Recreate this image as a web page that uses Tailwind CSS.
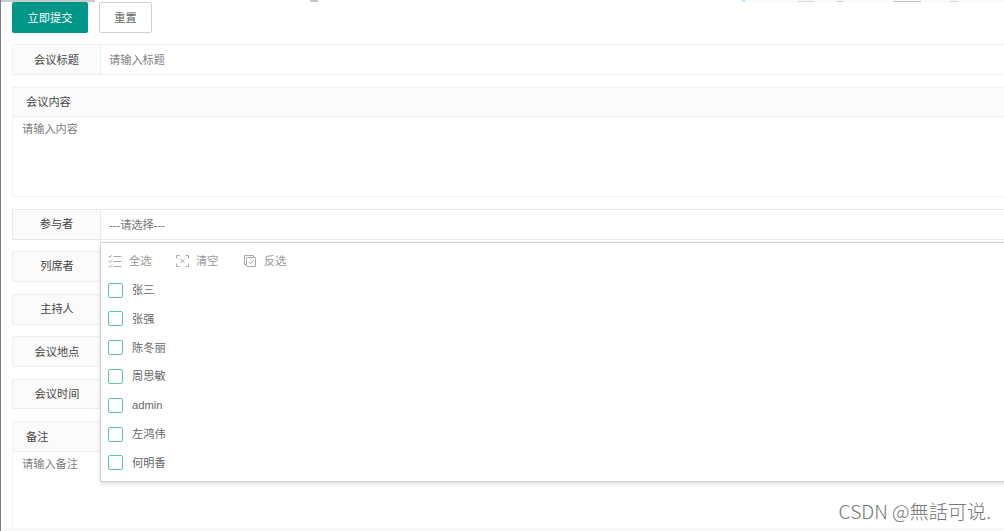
<!DOCTYPE html>
<html lang="zh-CN">

<head>
    <meta charset="UTF-8">
    <meta name="viewport" content="width=device-width, initial-scale=1.0">
    <title>会议发布</title>
    <script src="https://cdn.jsdelivr.net/npm/@tailwindcss/browser@4"></script>
</head>

<body class="relative w-[1004px] h-[531px] overflow-hidden bg-white border-l border-[#7d7b86] text-[11.2px] leading-[16px] text-[#444] font-['Liberation_Sans','Noto_Sans_CJK_SC',sans-serif]">

    <!-- Page edge above the form -->
    <div class="flex h-[2px]">
        <div class="w-[94px] bg-[#c9c9c9]"></div>
        <div class="w-[215px]"></div>
        <div class="w-[8px] bg-[#c9c9c9]"></div>
        <div class="w-[424px]"></div>
        <div class="w-[3px] bg-[#c8e8f7]"></div>
        <div class="flex-1 bg-[#f5fbfe] flex">
            <div class="w-[53px]"></div>
            <div class="w-[17px] h-px mt-px bg-[#d2d4d5]"></div>
            <div class="w-[21px]"></div>
            <div class="w-[8px] h-px mt-px bg-[#d2d4d5]"></div>
            <div class="w-[49px]"></div>
            <div class="w-[28px] h-px mt-px bg-[#c2c4c5]"></div>
            <div class="w-[29px]"></div>
            <div class="w-[9px] h-px mt-px bg-[#d2d4d5]"></div>
        </div>
    </div>

    <form class="pl-[11px]">
        <!-- Buttons -->
        <div class="flex gap-[11px] h-[42px]">
            <button type="button" class="w-[76px] h-[31px] pt-px rounded-[2px] bg-[#009688] text-white">立即提交</button>
            <button type="reset" class="w-[53px] h-[31px] pt-px rounded-[2px] border border-[#d0d0d0] bg-white text-[#666]">重置</button>
        </div>

        <!-- Title -->
        <div class="flex h-[31px] mb-[12px] border border-r-0 border-[#eee] rounded-l-[2px]">
            <label class="w-[88px] border-r border-[#eee] bg-[#fbfbfb] flex items-center justify-center">会议标题</label>
            <div class="flex-1 pl-[8px] flex items-center text-[#808080]">请输入标题</div>
        </div>

        <!-- Content -->
        <div class="h-[110px] mb-[12px] border border-r-0 border-[#f2f2f2] rounded-l-[2px]">
            <label class="h-[29px] pl-[13px] border-b border-[#eee] bg-[#fbfbfb] flex items-center">会议内容</label>
            <div class="pl-[9px] pt-[4px] text-[#808080]">请输入内容</div>
        </div>

        <!-- Participants -->
        <div class="relative flex h-[31px] mb-[11px] border border-r-0 border-[#e8e8e8] rounded-l-[2px]">
            <label class="w-[88px] pb-[2px] border-r border-[#e8e8e8] bg-[#fbfbfb] flex items-center justify-center">参与者</label>
            <div class="flex-1 pl-[8px] flex items-center text-[#777]">---请选择---</div>

            <!-- Dropdown -->
            <div class="absolute z-10 left-[87px] right-[-4px] top-[32px] h-[240px] pt-[4px] pl-[7px] bg-white border border-[#d2d2d2] shadow-[0_2px_4px_rgba(0,0,0,0.12)] text-[#666]">
                <div class="flex h-[28px] items-center text-[#999]">
                    <div class="flex items-center w-[67px]">
                        <svg class="w-[14px] h-[14px] mr-[7px]" viewBox="0 0 14 14" fill="none" stroke="#aaa">
                            <path d="M5.5 2.5h8M5.5 7.5h8M5.5 12.5h8" />
                            <path d="M.5 2l1.3 1.3L4.3 1M.5 7l1.3 1.3L4.3 6M.5 12l1.3 1.3L4.3 11" />
                        </svg>
                        <span>全选</span>
                    </div>
                    <div class="flex items-center w-[68px]">
                        <svg class="w-[14px] h-[14px] mr-[7px]" viewBox="0 0 14 14" fill="none" stroke="#aaa">
                            <path d="M4.5 1.5h-3v3M10.5 1.5h3v3M1.5 9.5v3h3M13.5 9.5v3h-3" />
                            <path d="M5.5 5l4 4M9.5 5l-4 4" />
                        </svg>
                        <span>清空</span>
                    </div>
                    <div class="flex items-center">
                        <svg class="w-[14px] h-[14px] mr-[7px]" viewBox="0 0 14 14" fill="none" stroke="#aaa">
                            <path d="M3.5 10.5h-2v-9h9v2" />
                            <rect x="3.5" y="3.5" width="9" height="9" rx=".5" />
                            <path d="M5.5 7.8l2 2L10.8 6" />
                        </svg>
                        <span>反选</span>
                    </div>
                </div>
                <ul id="people" class="pt-[0.7px]"></ul>
            </div>
        </div>

        <!-- Attendees, host, place, time -->
        <div class="flex h-[31px] mb-[12px] border border-r-0 border-[#eee] rounded-l-[2px]">
            <label class="w-[88px] pb-px bg-[#fbfbfb] flex items-center justify-center">列席者</label>
        </div>
        <div class="flex h-[31px] mb-[11px] border border-r-0 border-[#eee] rounded-l-[2px]">
            <label class="w-[88px] pb-px bg-[#fbfbfb] flex items-center justify-center">主持人</label>
        </div>
        <div class="flex h-[31px] mb-[12px] border border-r-0 border-[#eee] rounded-l-[2px]">
            <label class="w-[88px] bg-[#fbfbfb] flex items-center justify-center">会议地点</label>
        </div>
        <div class="flex h-[30px] mb-[12px] border border-r-0 border-[#eee] rounded-l-[2px]">
            <label class="w-[88px] bg-[#fbfbfb] flex items-center justify-center">会议时间</label>
        </div>

        <!-- Remarks -->
        <div class="h-[107px] border border-r-0 border-b-0 border-[#f2f2f2] rounded-tl-[2px]">
            <label class="h-[30px] pl-[13px] border-b border-[#eee] bg-[#fbfbfb] flex items-center">备注</label>
            <div class="pl-[9px] pt-[4px] text-[#808080]">请输入备注</div>
        </div>
    </form>
    <div class="h-[4px] bg-[#f8f8f8]"></div>

    <div class="absolute z-20 right-[13px] top-[498px] text-[19.2px] leading-[26px] font-light text-[#777] whitespace-nowrap font-['Noto_Sans_CJK_SC',sans-serif]">CSDN @無話可说.</div>

    <script>
        const people = ["张三", "张强", "陈冬丽", "周思敏", "admin", "左鸿伟", "何明香"];
        document.getElementById("people").innerHTML = people.map(name => `
            <li class="flex items-center h-[28.8px]">
                <svg class="w-[15px] h-[15px] mr-[9px]" viewBox="0 0 15 15" fill="none" stroke="#5fc799">
                    <rect x=".5" y=".5" width="14" height="14" rx="1.5" />
                </svg>
                <span>${name}</span>
            </li>`).join("");
    </script>

</body>

</html>
